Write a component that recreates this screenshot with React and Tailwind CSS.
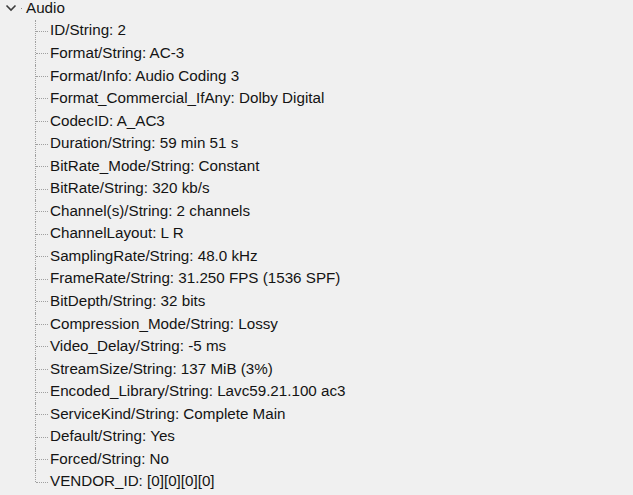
const items = [
  'ID/String: 2',
  'Format/String: AC-3',
  'Format/Info: Audio Coding 3',
  'Format_Commercial_IfAny: Dolby Digital',
  'CodecID: A_AC3',
  'Duration/String: 59 min 51 s',
  'BitRate_Mode/String: Constant',
  'BitRate/String: 320 kb/s',
  'Channel(s)/String: 2 channels',
  'ChannelLayout: L R',
  'SamplingRate/String: 48.0 kHz',
  'FrameRate/String: 31.250 FPS (1536 SPF)',
  'BitDepth/String: 32 bits',
  'Compression_Mode/String: Lossy',
  'Video_Delay/String: -5 ms',
  'StreamSize/String: 137 MiB (3%)',
  'Encoded_Library/String: Lavc59.21.100 ac3',
  'ServiceKind/String: Complete Main',
  'Default/String: Yes',
  'Forced/String: No',
  'VENDOR_ID: [0][0][0][0]',
]

export default function App() {
  return (
    <div
      className="w-[633px] h-[495px] overflow-hidden bg-[#f0f0f0] text-[#141414] text-[15.2px]"
      style={{ fontFamily: '"Liberation Sans", Arial, sans-serif' }}
    >
      <div className="-mt-[3px]">
        {/* Root node */}
        <div className="flex items-center h-[22.55px]">
          <div className="w-[21px] flex justify-center pl-[1px]">
            <svg width="12" height="8" viewBox="0 0 12 8">
              <path d="M1.5 1.5 L6 6 L10.5 1.5" fill="none" stroke="#3c3c3c" strokeWidth="1.6" />
            </svg>
          </div>
          <div className="w-[5px] flex items-center">
            <span className="w-[1px] h-[1px] bg-[#8c8c8c]" />
          </div>
          <span className="whitespace-nowrap">Audio</span>
        </div>

        {/* Children */}
        <div className="pl-[35px]">
          {items.map((text, i) => (
            <div key={text} className="flex items-center h-[22.55px]">
              <div className="relative w-[15px] h-full shrink-0">
                <span
                  className={
                    i === items.length - 1
                      ? 'absolute left-0 top-0 h-1/2 border-l border-dotted border-[#a0a0a0]'
                      : 'absolute left-0 top-0 h-full border-l border-dotted border-[#a0a0a0]'
                  }
                />
                <span className="absolute left-[1px] top-1/2 w-[12px] border-t border-dotted border-[#a0a0a0]" />
              </div>
              <span className="whitespace-nowrap">{text}</span>
            </div>
          ))}
        </div>
      </div>
    </div>
  )
}
